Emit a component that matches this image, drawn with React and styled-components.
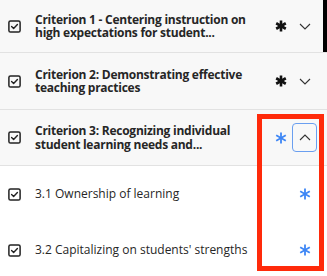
import React from "react";
import styled, { createGlobalStyle } from "styled-components";

const GlobalStyle = createGlobalStyle`
  html, body {
    margin: 0;
    padding: 0;
    background: #ffffff;
  }
  body {
    font-family: "Open Sans", "Noto Sans", sans-serif;
    color: #262626;
  }
`;

const Page = styled.div`
  position: relative;
  width: 327px;
  height: 276px;
  overflow: hidden;
`;

const List = styled.ul`
  list-style: none;
  margin: 0;
  padding: 0;
`;

const Row = styled.li`
  display: flex;
  align-items: center;
  height: ${(props) => props.h}px;
  box-sizing: border-box;
  padding: 0 10px 0 8px;
  background: ${(props) => (props.sub ? "#ffffff" : "#f8f8f8")};
  border-bottom: ${(props) => (props.sub ? "none" : "1px solid #e2e2e2")};
  box-shadow: ${(props) => (props.active ? "inset -4px 0 0 #000" : "none")};
`;

const Check = styled.span`
  flex: none;
  width: 13px;
  height: 13px;
  display: flex;
  align-items: center;
  justify-content: center;
  margin-right: 14px;
`;

const Title = styled.span`
  flex: 1;
  font-size: 12px;
  line-height: 13.5px;
  font-weight: ${(props) => (props.sub ? 400 : 700)};
  letter-spacing: ${(props) => (props.sub ? "0" : "-0.25px")};
  color: #262626;
  padding-right: 8px;
`;

const Star = styled.span`
  flex: none;
  width: 12px;
  height: 12px;
  display: flex;
  align-items: center;
  justify-content: center;
  margin-right: 5px;
`;

const Toggle = styled.button`
  flex: none;
  width: 25px;
  height: 29px;
  box-sizing: border-box;
  padding: 0;
  display: flex;
  align-items: center;
  justify-content: center;
  background: transparent;
  border: ${(props) => (props.open ? "1.5px solid #6a9ff0" : "1.5px solid transparent")};
  border-radius: 4px;
`;

const Slot = styled.span`
  flex: none;
  width: 25px;
  display: flex;
  justify-content: center;
`;

const Highlight = styled.div`
  position: absolute;
  left: 257px;
  top: 114px;
  width: 67px;
  height: 157px;
  box-sizing: border-box;
  border: 5px solid #ff2a0a;
  pointer-events: none;
`;

const CheckIcon = () => (
  <svg width="13" height="13" viewBox="0 0 13 13">
    <rect x="0.9" y="0.9" width="11.2" height="11.2" rx="1.6" fill="none" stroke="#222" strokeWidth="1.5" />
    <path d="M3.6 6.6 L5.6 8.5 L9.4 4.4" fill="none" stroke="#222" strokeWidth="1.4" strokeLinecap="round" strokeLinejoin="round" />
  </svg>
);

const Asterisk = ({ color, weight }) => (
  <svg width="12" height="12" viewBox="0 0 12 12">
    <g stroke={color} strokeWidth={weight} strokeLinecap="butt">
      <line x1="6" y1="0.5" x2="6" y2="11.5" />
      <line x1="1.2" y1="3.25" x2="10.8" y2="8.75" />
      <line x1="1.2" y1="8.75" x2="10.8" y2="3.25" />
    </g>
  </svg>
);

const Chevron = ({ up }) => (
  <svg width="12" height="7" viewBox="0 0 12 7">
    <path
      d={up ? "M1 6 L6 1 L11 6" : "M1 1 L6 6 L11 1"}
      fill="none"
      stroke="#333"
      strokeWidth="1.1"
    />
  </svg>
);

const criteria = [
  { title: "Criterion 1 - Centering instruction on high expectations for student...", h: 53, active: true },
  { title: "Criterion 2: Demonstrating effective teaching practices", h: 57 },
  { title: "Criterion 3: Recognizing individual student learning needs and...", h: 56, open: true },
];

const subs = ["3.1 Ownership of learning", "3.2 Capitalizing on students' strengths"];

export default function App() {
  return (
    <Page>
      <GlobalStyle />
      <List>
        {criteria.map((c) => (
          <Row key={c.title} h={c.h} active={c.active}>
            <Check>
              <CheckIcon />
            </Check>
            <Title>{c.title}</Title>
            <Star>
              {c.open ? <Asterisk color="#3d86f5" weight={1.8} /> : <Asterisk color="#111" weight={2.6} />}
            </Star>
            <Toggle open={c.open}>
              <Chevron up={c.open} />
            </Toggle>
          </Row>
        ))}
        {subs.map((s) => (
          <Row key={s} h={56} sub>
            <Check>
              <CheckIcon />
            </Check>
            <Title sub>{s}</Title>
            <Slot>
              <Asterisk color="#3d86f5" weight={1.8} />
            </Slot>
          </Row>
        ))}
      </List>
      <Highlight />
    </Page>
  );
}
